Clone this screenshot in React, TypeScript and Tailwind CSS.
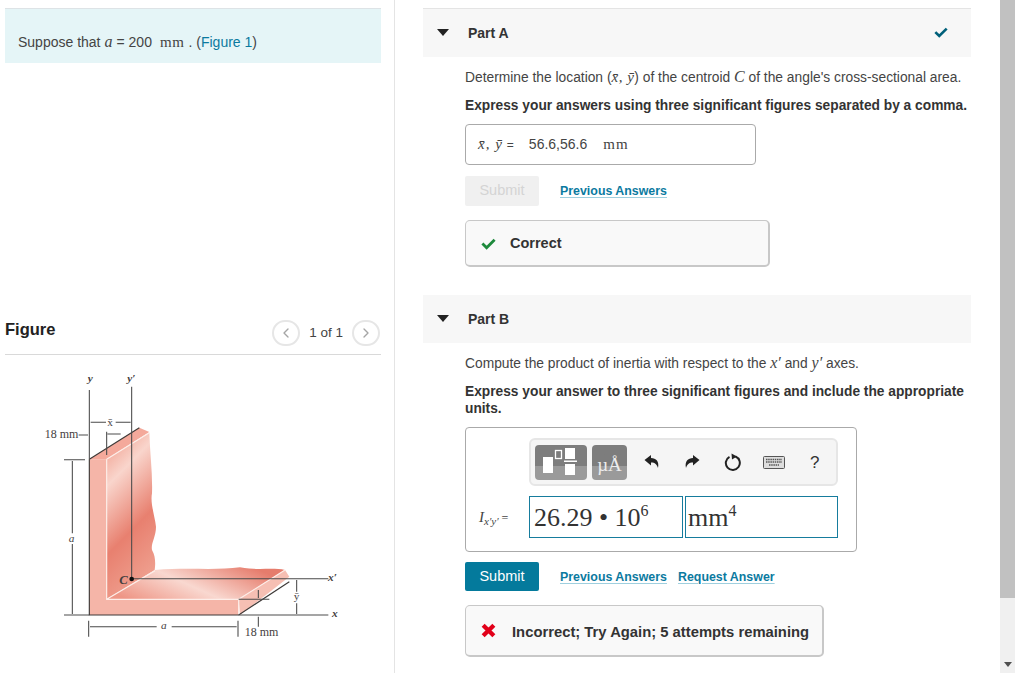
import React from "react";
import { ChevronLeft, ChevronRight } from "lucide-react";

const serif = "font-['Liberation_Serif',serif]";

function Check({ className }: { className: string }) {
  return (
    <svg viewBox="0 0 16 12" className={className} fill="none" stroke="currentColor" strokeWidth="3">
      <path d="M1.5 5.5 L6 10 L14.5 1.5" />
    </svg>
  );
}

function Triangle() {
  return (
    <svg viewBox="0 0 12 7" className="w-[12px] h-[7px] fill-[#222] -mt-[1px]">
      <path d="M0 0 H12 L6 7 Z" />
    </svg>
  );
}

function PartHeader({ label, check }: { label: string; check?: boolean }) {
  return (
    <div className="h-[48px] bg-[#f7f7f7] flex items-center pl-[14px] pr-[23px]">
      <Triangle />
      <span className="ml-[19px] mt-[1px] text-[14px] font-bold text-[#333]">{label}</span>
      {check && <Check className="ml-auto -mt-[2px] w-[14px] h-[11px] text-[#00607a]" />}
    </div>
  );
}

function Link({ children }: { children: React.ReactNode }) {
  return (
    <span className="text-[12.4px] font-bold text-[#0b7a9f] underline decoration-[#9fcfde] underline-offset-2 whitespace-nowrap">
      {children}
    </span>
  );
}

function Figure() {
  return (
    <svg viewBox="15 0 1128 939" className="w-[376px] h-[313px] mt-[5px] block">
      <defs>
        <linearGradient id="wall" x1="0.35" y1="0" x2="0.65" y2="1">
          <stop offset="0" stopColor="#f2a99a" />
          <stop offset="0.2" stopColor="#f9d5cc" />
          <stop offset="0.58" stopColor="#e8806f" />
          <stop offset="1" stopColor="#f0a595" />
        </linearGradient>
        <linearGradient id="floor" x1="0" y1="0.7" x2="1" y2="0.3">
          <stop offset="0" stopColor="#ee9686" />
          <stop offset="0.45" stopColor="#f9d8d0" />
          <stop offset="0.95" stopColor="#e67c6c" />
        </linearGradient>
        <filter id="soft">
          <feGaussianBlur stdDeviation="1.6" />
        </filter>
      </defs>
      <g filter="url(#soft)">
        <path d="M320 298 L448 218 C450 280 458 340 456 400 C450 430 465 470 468 500 C468 530 452 550 456 570 C468 590 466 615 464 630 L320 718 Z" fill="url(#wall)" />
        <path d="M320 718 L465 630 C560 622 650 632 720 622 C770 632 820 622 855 630 L716 718 Z" fill="url(#floor)" />
        <path d="M268 298 L320 298 L320 718 L716 718 L716 765 L268 765 Z" fill="#f5b5a8" />
        <path d="M268 298 L418 203 L448 216 L320 298 Z" fill="#f4a99b" />
        <path d="M716 718 L855 630 L868 650 L720 765 Z" fill="#f6bfb3" />
        <path d="M320 298 L320 718 L716 718 M320 298 L448 218 M320 718 L465 632 M716 718 L716 765 M716 718 L855 630" fill="none" stroke="#fdeee9" strokeWidth="3.5" />
        <path d="M268 298 L268 765 L716 765 L868 665 M268 298 L418 203" fill="none" stroke="#3f3a38" strokeWidth="3.5" />
        <g fill="none" stroke="#4a4a4a" strokeWidth="3.2">
          <path d="M268 90 V298 M395 80 V655 M320 215 V285" />
          <path d="M272 187 H318 M347 187 H392 M236 225 H264 M322 222 H362" />
          <path d="M192 299 H255 M192 765 H268 M217 303 V520 M217 552 V762" />
          <path d="M395 656 H985 M716 765 H985 M890 660 V695 M890 730 V762 M716 718 H808 M775 690 V714 M775 770 V800" />
          <path d="M266 782 V830 M714 782 V830 M270 800 H470 M515 800 H710" />
        </g>
        <circle cx="395" cy="657" r="7" fill="#111" />
      </g>
      <g fill="#45403e" fontFamily="'Liberation Serif', serif">
        <text x="134" y="233" fontSize="36">18 mm</text>
        <text x="734" y="828" fontSize="36">18 mm</text>
        <text x="263" y="65" fontSize="34" fontStyle="italic" fontWeight="bold">y</text>
        <text x="382" y="65" fontSize="34" fontStyle="italic" fontWeight="bold">y′</text>
        <text x="322" y="197" fontSize="34">x̄</text>
        <text x="206" y="547" fontSize="34" fontStyle="italic">a</text>
        <text x="483" y="808" fontSize="34" fontStyle="italic">a</text>
        <text x="358" y="672" fontSize="38" fontStyle="italic" fontWeight="bold">C</text>
        <text x="984" y="662" fontSize="34" fontStyle="italic" fontWeight="bold">x′</text>
        <text x="996" y="770" fontSize="34" fontStyle="italic" fontWeight="bold">x</text>
        <text x="881" y="720" fontSize="34">ȳ</text>
      </g>
    </svg>
  );
}

function Toolbar() {
  return (
    <div className="h-[48px] rounded-[6px] border-2 border-[#e6e6e6] bg-[#f5f5f5] flex items-center pl-[4px]">
      <div className="w-[52px] h-[35px] rounded-[4px] bg-gradient-to-b from-[#7d7d7d] from-60% to-[#9a9a9a] to-60% shrink-0">
        <svg viewBox="0 0 52 35" className="w-[52px] h-[35px]">
          <rect x="8" y="12" width="10" height="16" fill="#fff" />
          <rect x="20.500" y="5.500" width="6" height="8" fill="none" stroke="#fff" strokeWidth="1.300" />
          <rect x="30" y="3" width="10" height="11" fill="#fff" />
          <rect x="29" y="15.500" width="13" height="1.500" fill="#fff" />
          <rect x="30" y="19" width="10" height="11" fill="#fff" />
        </svg>
      </div>
      <div className={`ml-[5px] w-[35px] h-[35px] rounded-[4px] bg-gradient-to-b from-[#7d7d7d] from-60% to-[#9a9a9a] to-60% flex items-end justify-center pb-[5px] text-[19px] leading-[20px] text-[#ededed] shrink-0 ${serif}`}>
        µÅ
      </div>
      <svg viewBox="0 0 16 16" className="ml-[17px] w-[16px] h-[16px] fill-[#222] shrink-0">
        <path d="M0.500 6 L7 1 V4 C12 4 15.500 7.500 14 14 C13 10.500 11 8.500 7 8.500 V11.500 Z" />
      </svg>
      <svg viewBox="0 0 16 16" className="ml-[24px] w-[16px] h-[16px] fill-[#222] shrink-0">
        <path d="M15.500 6 L9 1 V4 C4 4 0.500 7.500 2 14 C3 10.500 5 8.500 9 8.500 V11.500 Z" />
      </svg>
      <svg viewBox="0 0 18 18" className="ml-[24px] w-[18px] h-[18px] shrink-0" fill="none" stroke="#222" strokeWidth="2">
        <path d="M11.500 3.500 A7 7 0 1 1 5.500 3.800" />
        <path d="M7.500 0.500 L13 3.400 L8 6.500 Z" fill="#222" stroke="none" />
      </svg>
      <svg viewBox="0 0 22 13" className="ml-[21px] w-[22px] h-[13px] shrink-0">
        <rect x="0.500" y="0.500" width="21" height="12" rx="1" fill="#ddd" stroke="#555" />
        <path d="M3 3.500 H19 M3 6 H19 M6 9 H16" stroke="#555" strokeWidth="1.500" strokeDasharray="1.500 0.700" />
      </svg>
      <span className="ml-[25px] text-[17px] leading-none text-[#333]">?</span>
    </div>
  );
}

export default function App() {
  return (
    <div className="w-[1024px] h-[673px] overflow-hidden flex bg-white font-['Liberation_Sans',Arial,sans-serif] text-[#333]">
      <div className="w-[395px] shrink-0 h-full border-r border-[#e4e4e4] pl-[5px] pr-[13px] pt-[8px]">
        <div className="h-[55px] border-t border-[#dde3e6] bg-[#e5f5f7] pl-[13px] pt-[12px] flex items-center text-[14px] text-[#444]">
          <span>Suppose that </span>
          <span className={`${serif} italic text-[16px] ml-[4px]`}>a</span>
          <span className="ml-[4px]">= 200</span>
          <span className={`${serif} text-[15px] ml-[8px] tracking-[0.6px]`}>mm</span>
          <span className="ml-[4px]">. (</span>
          <span className="text-[#0b7a9f]">Figure 1</span>
          <span>)</span>
        </div>
        <div className="mt-[252px] h-[40px] border-b border-[#d9d9d9] flex items-start">
          <span className="text-[16.500px] font-bold leading-[18px] text-[#222] mt-[5px]">Figure</span>
          <div className="ml-auto flex items-center mt-[5px] text-[13.500px] text-[#444]">
            <span className="w-[28px] h-[26px] rounded-full border-2 border-[#e6e6e6] flex items-center justify-center">
              <ChevronLeft className="w-[16px] h-[16px] text-[#a5a5a5]" />
            </span>
            <span className="mx-[9px]">1 of 1</span>
            <span className="w-[28px] h-[26px] rounded-full border-2 border-[#e6e6e6] flex items-center justify-center mr-[1px]">
              <ChevronRight className="w-[16px] h-[16px] text-[#a5a5a5]" />
            </span>
          </div>
        </div>
        <Figure />
      </div>

      <div className="w-[605px] shrink-0 h-full pl-[28px] pr-[29px] pt-[8px]">
        <div className="border-t border-[#e4e4e4]">
          <PartHeader label="Part A" check />
        </div>
        <div className="pl-[42px]">
          <p className="mt-[12px] text-[13.800px] leading-[18px] whitespace-nowrap text-[#444]">
            Determine the location (<span className={`${serif} italic text-[15px] leading-none tracking-[0.5px]`}>x̄, ȳ</span>) of the centroid <span className={`${serif} italic text-[16px] leading-none`}>C</span> of the angle's cross-sectional area.
          </p>
          <p className="mt-[10px] text-[13.750px] leading-[18px] font-bold whitespace-nowrap">
            Express your answers using three significant figures separated by a comma.
          </p>
          <div className="mt-[9px] w-[291px] h-[41px] rounded-[4px] border border-[#aaa] flex items-center pl-[12px] text-[14px] text-[#444]">
            <span className={`${serif} italic text-[15px] tracking-[1px]`}>x̄, ȳ</span>
            <span className="ml-[4px] text-[12px]">=</span>
            <span className="ml-[15px]">56.6,56.6</span>
            <span className={`${serif} text-[15px] ml-[16px] tracking-[1px]`}>mm</span>
          </div>
          <div className="mt-[11px] flex items-center">
            <span className="w-[74px] h-[30px] rounded-[2px] bg-[#f0f0f0] flex items-center justify-center text-[14.500px] text-[#d4d4d4]">Submit</span>
            <span className="ml-[21px] -mt-[2px]"><Link>Previous Answers</Link></span>
          </div>
          <div className="mt-[14px] w-[305px] h-[47px] rounded-[5px] border border-[#c8c8c8] border-r-2 border-b-2 bg-[#f9f9f9] flex items-center pl-[15px] pt-[1px] text-[14.500px] font-bold">
            <Check className="w-[15px] h-[12px] text-[#1e8a3c]" />
            <span className="ml-[14px]">Correct</span>
          </div>
        </div>

        <div className="mt-[28px]">
          <PartHeader label="Part B" />
        </div>
        <div className="pl-[42px]">
          <p className="mt-[12px] text-[13.800px] leading-[18px] whitespace-nowrap text-[#444]">
            Compute the product of inertia with respect to the <span className={`${serif} italic text-[16px] leading-none`}>x′</span> and <span className={`${serif} italic text-[16px] leading-none`}>y′</span> axes.
          </p>
          <p className="mt-[10px] text-[13.750px] leading-[17px] font-bold w-[506px]">
            Express your answer to three significant figures and include the appropriate units.
          </p>
          <div className="mt-[10px] w-[392px] h-[125px] rounded-[4px] border border-[#aaa] pt-[10px] pl-[63px] pr-[18px]">
            <Toolbar />
            <div className="mt-[10px] flex h-[42px] relative">
              <span className={`absolute -left-[50px] top-[10px] text-[15px] italic text-[#444] ${serif}`}>
                I<sub className="text-[11px]">x′y′</sub><span className="not-italic text-[12px] ml-[3px]">=</span>
              </span>
              <div className={`w-[154px] border border-[#167c9d] pl-[4px] pt-[1px] text-[26px] leading-[40px] text-[#333] ${serif}`}>
                26.29 • 10<sup className="text-[16px] -top-[10px]">6</sup>
              </div>
              <div className={`ml-[2px] w-[153px] border border-[#167c9d] pl-[2px] pt-[1px] text-[26px] leading-[40px] text-[#333] ${serif}`}>
                mm<sup className="text-[16px] -top-[10px]">4</sup>
              </div>
            </div>
          </div>
          <div className="mt-[10px] flex items-center">
            <span className="w-[74px] h-[29px] rounded-[2px] bg-[#047a9c] flex items-center justify-center text-[14.500px] text-white">Submit</span>
            <span className="ml-[21px] -mt-[2px]"><Link>Previous Answers</Link></span>
            <span className="ml-[11px] -mt-[2px]"><Link>Request Answer</Link></span>
          </div>
          <div className="mt-[14px] w-[359px] h-[52px] rounded-[5px] border border-[#c8c8c8] border-r-2 border-b-2 bg-[#f9f9f9] flex items-center pl-[15px] pt-[3px] text-[14.800px] font-bold whitespace-nowrap">
            <svg viewBox="0 0 14 14" className="w-[15px] h-[15px] -mt-[4px]" stroke="#e2001a" strokeWidth="4" fill="none">
              <path d="M2 2 L12 12 M12 2 L2 12" />
            </svg>
            <span className="ml-[16px]">Incorrect; Try Again; 5 attempts remaining</span>
          </div>
        </div>
      </div>

      <div className="w-[15px] shrink-0 h-full bg-[#f0f0f0] flex flex-col">
        <div className="h-[598px] bg-[#c1c1c1]" />
        <svg viewBox="0 0 8 5" className="mt-auto mb-[6px] mx-auto w-[8px] h-[5px] fill-[#505050]">
          <path d="M0 0 H8 L4 5 Z" />
        </svg>
      </div>
    </div>
  );
}
